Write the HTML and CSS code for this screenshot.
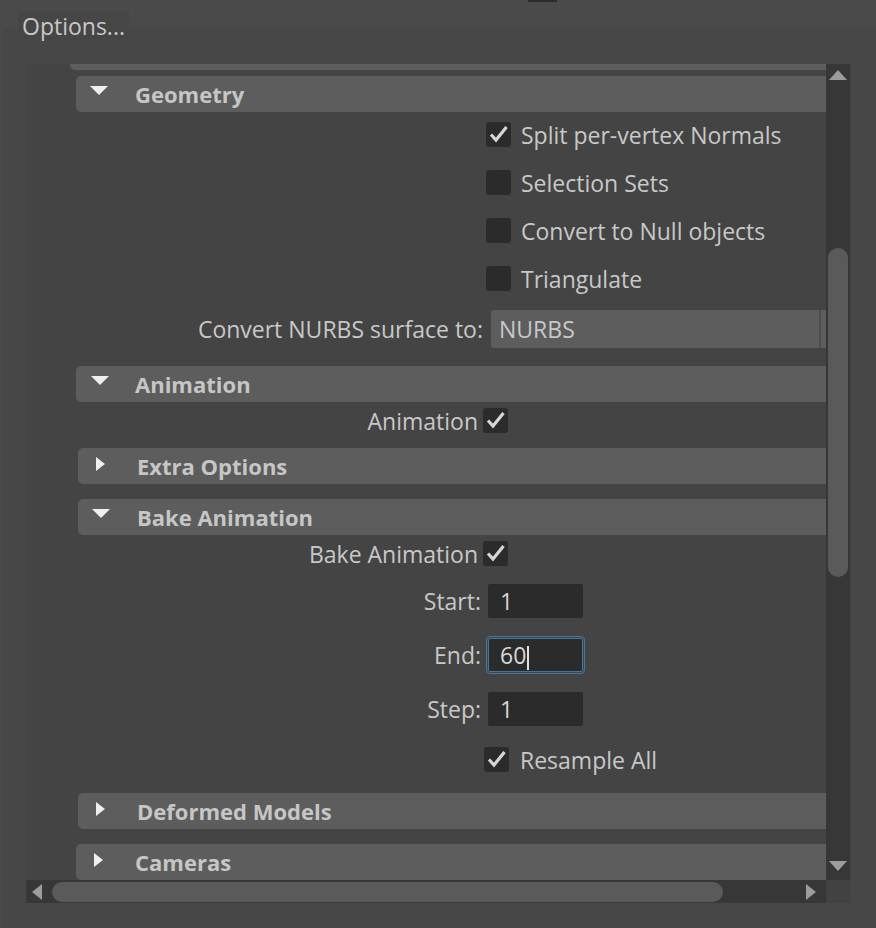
FILE: index.html
```html
<!DOCTYPE html>
<html>
<head>
    <title>Options</title>
    <link rel="stylesheet" href="styles.css">
</head>
<body>
    <div class="grip"></div>
    <div class="group">
        <div class="group-title">Options...</div>
        <div class="scroller">
            <div class="viewport">
                <div class="content">
                    <div class="parent-end"></div>

                    <div class="section first">
                        <div class="section-head"><span class="arrow"></span>Geometry</div>
                        <div class="section-body geometry">
                            <div class="row opt">
                                <span class="box"><svg viewBox="0 0 25 25" width="25" height="25"><path d="M5 12.5l5 5.5L20.5 5" fill="none" stroke="#d6d6d6" stroke-width="3.2"/></svg></span>
                                <span class="opt-text">Split per-vertex Normals</span>
                            </div>
                            <div class="row opt">
                                <span class="box"></span>
                                <span class="opt-text">Selection Sets</span>
                            </div>
                            <div class="row opt">
                                <span class="box"></span>
                                <span class="opt-text">Convert to Null objects</span>
                            </div>
                            <div class="row opt">
                                <span class="box"></span>
                                <span class="opt-text">Triangulate</span>
                            </div>
                            <div class="row select-row">
                                <span class="label">Convert NURBS surface to:</span>
                                <div class="select">
                                    <span class="select-value">NURBS</span>
                                    <span class="select-btn"></span>
                                </div>
                            </div>
                        </div>
                    </div>

                    <div class="section">
                        <div class="section-head"><span class="arrow anim"></span>Animation</div>
                        <div class="section-body">
                            <div class="row lead">
                                <span class="label">Animation</span>
                                <span class="box"><svg viewBox="0 0 25 25" width="25" height="25"><path d="M5 12.5l5 5.5L20.5 5" fill="none" stroke="#d6d6d6" stroke-width="3.2"/></svg></span>
                            </div>
                        </div>
                    </div>

                    <div class="section">
                        <div class="section-head nudge"><span class="arrow closed"></span>Extra Options</div>
                    </div>

                    <div class="section">
                        <div class="section-head nudge"><span class="arrow"></span>Bake Animation</div>
                        <div class="section-body bake">
                            <div class="row lead">
                                <span class="label">Bake Animation</span>
                                <span class="box"><svg viewBox="0 0 25 25" width="25" height="25"><path d="M5 12.5l5 5.5L20.5 5" fill="none" stroke="#d6d6d6" stroke-width="3.2"/></svg></span>
                            </div>
                            <div class="row field-row">
                                <span class="label">Start:</span>
                                <span class="field">1</span>
                            </div>
                            <div class="row field-row">
                                <span class="label">End:</span>
                                <span class="field focus">60<span class="caret"></span></span>
                            </div>
                            <div class="row field-row">
                                <span class="label">Step:</span>
                                <span class="field">1</span>
                            </div>
                            <div class="row opt resample">
                                <span class="box"><svg viewBox="0 0 25 25" width="25" height="25"><path d="M5 12.5l5 5.5L20.5 5" fill="none" stroke="#d6d6d6" stroke-width="3.2"/></svg></span>
                                <span class="opt-text">Resample All</span>
                            </div>
                        </div>
                    </div>

                    <div class="section">
                        <div class="section-head nudge"><span class="arrow closed"></span>Deformed Models</div>
                    </div>

                    <div class="section">
                        <div class="section-head"><span class="arrow closed"></span>Cameras</div>
                    </div>
                </div>
            </div>

            <div class="vbar">
                <span class="step-up"></span>
                <span class="vthumb"></span>
                <span class="step-down"></span>
            </div>

            <div class="hbar">
                <span class="step-left"></span>
                <span class="hthumb"></span>
                <span class="step-right"></span>
            </div>
            <div class="corner"></div>
        </div>
    </div>
</body>
</html>
```

FILE: styles.css
```css
body {
    margin: 0;
    height: 928px;
    overflow: hidden;
    background-color: #4a4a4a;
    font-family: "Open Sans", "DejaVu Sans", sans-serif;
    font-size: 23px;
    color: #c8c8c8;
}

.grip {
    width: 29px;
    height: 2px;
    margin-left: 528px;
    background-color: #2c2c2c;
}

/* outer group box with its title sitting on the top edge */
.group {
    display: flex;
    flex-direction: column;
    margin: 25px 0 0 3px;
    height: 901px;
    background-color: #474747;
}

.group-title {
    align-self: flex-start;
    margin: -16px 0 0 15px;
    padding: 0 4px;
    line-height: 30px;
    background-color: #464646;
}

.scroller {
    display: grid;
    grid-template-columns: 800px 24px;
    grid-template-rows: 816px 23px;
    margin: 23px 0 0 23px;
}

.viewport {
    overflow: hidden;
    background-color: #444;
}

.content {
    width: 900px;
}

.parent-end {
    height: 6px;
    margin-left: 44px;
    background-color: #5d5d5d;
    border-radius: 0 0 0 5px;
}

/* collapsible frames */
.section {
    margin-top: 15px;
}

.section.first {
    margin-top: 6px;
}

.section-head {
    display: flex;
    align-items: center;
    height: 36px;
    margin-left: 50px;
    background-color: #5d5d5d;
    border-radius: 5px;
    font-size: 22px;
    font-weight: 700;
    color: #c6c6c6;
}

.section-head.nudge {
    margin-left: 52px;
}

.arrow {
    flex: none;
    align-self: stretch;
    width: 59px;
}

.arrow::before {
    content: "";
    display: block;
    width: 0;
    height: 0;
    margin: 10px 0 0 14px;
    border-left: 9px solid transparent;
    border-right: 9px solid transparent;
    border-top: 9px solid #efefef;
}

.arrow.anim::before {
    margin-left: 15px;
}

.arrow.closed::before {
    margin: 9px 0 0 18px;
    border-top: 7.5px solid transparent;
    border-bottom: 7.5px solid transparent;
    border-left: 9px solid #efefef;
    border-right: 0;
}

.section-body {
    padding-top: 6px;
}

.section-body.geometry {
    padding: 10px 0 3px;
}

.section-body.bake {
    padding-bottom: 6px;
}

/* form rows */
.row {
    display: flex;
    align-items: center;
    height: 25px;
}

.label {
    flex: none;
    width: 455px;
    text-align: right;
}

.box {
    flex: none;
    width: 25px;
    height: 25px;
    background-color: #2b2b2b;
    border-radius: 3px;
}

.box svg {
    display: block;
}

.opt .box {
    margin-left: 460px;
}

.opt-text {
    margin-left: 10px;
}

.opt + .opt {
    margin-top: 23px;
}

.lead .label {
    width: 452px;
}

.lead .box {
    margin-left: 5px;
}

.select-row {
    height: 38px;
    margin-top: 19px;
}

.select-row .label {
    width: 457px;
}

.select {
    display: flex;
    width: 370px;
    height: 38px;
    margin-left: 8px;
    background-color: #5d5d5d;
    border-radius: 3px;
}

.select-value {
    width: 320px;
    padding-left: 8px;
    line-height: 38px;
}

.select-btn {
    flex: 1;
    border-left: 2px solid #4d4d4d;
}

.field-row {
    height: 34px;
    margin-top: 20px;
}

.lead + .field-row {
    margin-top: 18px;
}

.field {
    box-sizing: border-box;
    width: 95px;
    height: 34px;
    margin-left: 7px;
    padding-left: 12px;
    line-height: 34px;
    background-color: #2b2b2b;
    border-radius: 2px;
    color: #d8d8d8;
}

.field.focus {
    padding-left: 11px;
    line-height: 32px;
    border: 1px solid #44769e;
    outline: 1px solid #44769e;
    outline-offset: 1px;
}

.caret {
    display: inline-block;
    width: 2px;
    height: 24px;
    margin-left: 1px;
    vertical-align: middle;
    background-color: #e2e2e2;
}

.opt.resample {
    margin-top: 21px;
}

.resample .box {
    margin-left: 458px;
}

.resample .opt-text {
    margin-left: 11px;
}

/* scroll bars */
.vbar {
    display: flex;
    flex-direction: column;
    align-items: center;
    background-color: #373737;
}

.step-up {
    margin-top: 6px;
    border-left: 9px solid transparent;
    border-right: 9px solid transparent;
    border-bottom: 10px solid #9c9c9c;
}

.vthumb {
    width: 20px;
    height: 329px;
    margin-top: 168px;
    border-radius: 10px;
    background-color: #5a5a5a;
}

.step-down {
    margin: auto 0 9px;
    border-left: 9px solid transparent;
    border-right: 9px solid transparent;
    border-top: 10px solid #9c9c9c;
}

.hbar {
    display: flex;
    align-items: center;
    background-color: #373737;
}

.step-left {
    margin-left: 6px;
    border-top: 8px solid transparent;
    border-bottom: 8px solid transparent;
    border-right: 10px solid #9c9c9c;
}

.hthumb {
    width: 671px;
    height: 20px;
    margin-left: 10px;
    border-radius: 10px;
    background-color: #5a5a5a;
}

.step-right {
    margin: 0 10px 0 auto;
    border-top: 8px solid transparent;
    border-bottom: 8px solid transparent;
    border-left: 10px solid #9c9c9c;
}

.corner {
    background-color: #424242;
}
```
